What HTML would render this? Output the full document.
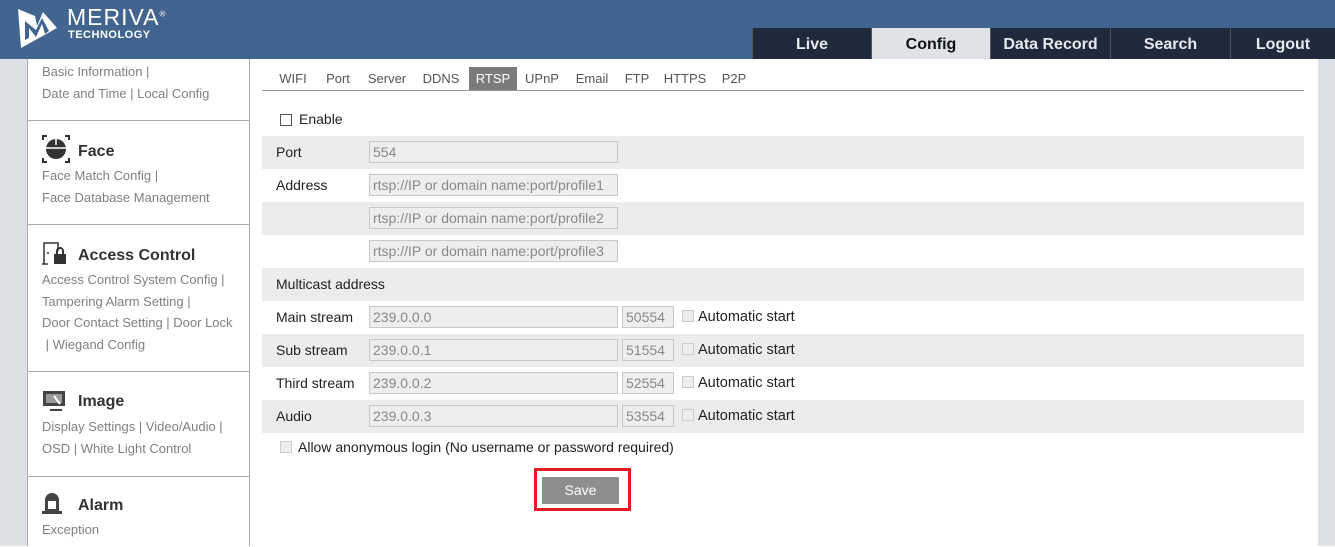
<!DOCTYPE html>
<html><head><meta charset="utf-8"><style>
*{margin:0;padding:0;box-sizing:border-box}
body{width:1335px;height:546px;overflow:hidden;background:#fff;font-family:"Liberation Sans",sans-serif;position:relative}
.hdr{position:absolute;left:0;top:0;width:1335px;height:59px;background:#41658e}
.nav{position:absolute;top:28px;height:31px;background:#1f2a3c;color:#e6e9ee;font-size:16px;font-weight:bold;text-align:center;line-height:34px;border-left:1px solid #555}
.nav.on{background:#dfe3e8;color:#111}
.lstrip{position:absolute;left:0;top:59px;width:27px;height:487px;background:#dde1e6}
.rstrip{position:absolute;left:1318px;top:59px;width:17px;height:487px;background:#dde1e6}
.side{position:absolute;left:27px;top:59px;width:223px;height:487px;border-left:1px solid #aaa;border-right:1px solid #aaa;background:#fff}
.sec{position:absolute;left:0;width:221px;border-bottom:1px solid #aaa}
.sec .t{position:absolute;left:50px;font-size:16px;font-weight:bold;color:#333}
.sec .l{position:absolute;left:14px;font-size:13px;color:#808080;line-height:21.5px}
.ic{position:absolute;left:14px}
.tabs{position:absolute;left:262px;top:67px;width:1042px;height:24px;border-bottom:1px solid #999}
.tab{position:absolute;top:0;height:23px;font-size:13px;color:#555;line-height:23px;text-align:center}
.tab.on{background:#7b7b7b;color:#fff}
.row{position:absolute;left:262px;width:1042px;height:33px;font-size:14px;color:#222;line-height:33px}
.g{background:#ececec}
.row .lb{position:absolute;left:14px}
.in{position:absolute;top:5px;height:22px;border:1px solid #c8c8c8;background:#eeeeee;color:#888;font-size:14px;line-height:20px;padding-left:3px}
.cb{position:absolute;width:12px;height:12px;border:1px solid #ccc;background:#eee}
.as{position:absolute;left:436px;font-size:14.5px;color:#222}
</style></head><body>
<div class="hdr">
<svg style="position:absolute;left:15px;top:4px" width="44" height="46" viewBox="0 0 44 46"><path d="M3 5 L20 12 L22 22 L28 8 L42 24 L6 44 Z" fill="#fff"/><path d="M10 17 L10 36 L14 34 L14 24 L21 33 L27 20 L30 30 L34 27 L27 14 L21 26 Z" fill="#41658e"/></svg>
<div style="position:absolute;left:67px;top:4px;color:#fff;font-size:23px;letter-spacing:1px">MERIVA<sup style="font-size:8px">®</sup></div>
<div style="position:absolute;left:68px;top:29px;color:#fff;font-size:11px;font-weight:bold;letter-spacing:.5px">TECHNOLOGY</div>
</div>
<div class="nav" style="left:752px;width:119px">Live</div>
<div class="nav on" style="left:871px;width:119px">Config</div>
<div class="nav" style="left:990px;width:120px">Data Record</div>
<div class="nav" style="left:1110px;width:120px">Search</div>
<div class="nav" style="left:1230px;width:105px">Logout</div>
<div class="lstrip"></div><div class="rstrip"></div>
<div class="side">
<div class="sec" style="top:0;height:62px"><div class="l" style="top:2px">Basic Information |<br>Date and Time | Local Config</div></div>
<div class="sec" style="top:62px;height:104px">
<svg class="ic" style="top:14px" width="28" height="28" viewBox="0 0 28 28"><path d="M1 5V1h4M23 1h4v4M1 23v4h4M27 23v4h-4" stroke="#333" stroke-width="2" fill="none"/><circle cx="14" cy="14" r="10" fill="#333"/><path d="M4 13h20M14 4v6" stroke="#fff" stroke-width="1.5"/></svg>
<div class="t" style="top:22px">Face</div><div class="l" style="top:44px">Face Match Config |<br>Face Database Management</div></div>
<div class="sec" style="top:166px;height:147px">
<svg class="ic" style="top:16px" width="26" height="24" viewBox="0 0 26 24"><path d="M2 23V2h14v8M0 23h6" stroke="#333" stroke-width="1.5" fill="none"/><rect x="12" y="13" width="12" height="10" fill="#333"/><path d="M15 13v-3a3 3 0 0 1 6 0v3" stroke="#333" stroke-width="2" fill="none"/><circle cx="6" cy="12" r="1" fill="#333"/></svg>
<div class="t" style="top:22px">Access Control</div><div class="l" style="top:44px">Access Control System Config |<br>Tampering Alarm Setting |<br>Door Contact Setting | Door Lock<br>&nbsp;| Wiegand Config</div></div>
<div class="sec" style="top:313px;height:105px">
<svg class="ic" style="top:18px" width="26" height="22" viewBox="0 0 26 22"><rect x="1" y="1" width="22" height="15" fill="#444"/><rect x="4" y="4" width="16" height="9" fill="#999"/><path d="M8 20h12" stroke="#444" stroke-width="2"/><path d="M12 6l6 8" stroke="#fff" stroke-width="2"/></svg>
<div class="t" style="top:21px">Image</div><div class="l" style="top:44px">Display Settings | Video/Audio |<br>OSD | White Light Control</div></div>
<div class="sec" style="top:418px;height:70px;border:none">
<svg class="ic" style="top:14px" width="20" height="24" viewBox="0 0 20 24"><path d="M3 20V9a7 7 0 0 1 14 0v11z" fill="#444"/><rect x="6" y="10" width="8" height="8" fill="#fff"/><rect x="0" y="20" width="20" height="3" fill="#444"/></svg>
<div class="t" style="top:20px">Alarm</div><div class="l" style="top:42px">Exception</div></div>
</div>
<div class="tabs">
<div class="tab" style="left:12px;width:38px">WIFI</div>
<div class="tab" style="left:58px;width:36px">Port</div>
<div class="tab" style="left:102px;width:46px">Server</div>
<div class="tab" style="left:156px;width:46px">DDNS</div>
<div class="tab on" style="left:207px;width:48px">RTSP</div>
<div class="tab" style="left:260px;width:40px">UPnP</div>
<div class="tab" style="left:308px;width:44px">Email</div>
<div class="tab" style="left:360px;width:30px">FTP</div>
<div class="tab" style="left:398px;width:50px">HTTPS</div>
<div class="tab" style="left:456px;width:32px">P2P</div>
</div>
<div class="row" style="top:103px"><div class="cb" style="left:18px;top:11px;background:#fff;border-color:#555"></div><span style="position:absolute;left:37px">Enable</span></div>
<div class="row g" style="top:136px"><span class="lb">Port</span><div class="in" style="left:107px;width:249px">554</div></div>
<div class="row" style="top:169px"><span class="lb">Address</span><div class="in" style="left:107px;width:249px">rtsp://IP or domain name:port/profile1</div></div>
<div class="row g" style="top:202px"><div class="in" style="left:107px;width:249px">rtsp://IP or domain name:port/profile2</div></div>
<div class="row" style="top:235px"><div class="in" style="left:107px;width:249px">rtsp://IP or domain name:port/profile3</div></div>
<div class="row g" style="top:268px"><span class="lb">Multicast address</span></div>
<div class="row" style="top:301px"><span class="lb">Main stream</span><div class="in" style="left:107px;width:249px">239.0.0.0</div><div class="in" style="left:360px;width:52px">50554</div><div class="cb" style="left:420px;top:9px"></div><span class="as">Automatic start</span></div>
<div class="row g" style="top:334px"><span class="lb">Sub stream</span><div class="in" style="left:107px;width:249px">239.0.0.1</div><div class="in" style="left:360px;width:52px">51554</div><div class="cb" style="left:420px;top:9px"></div><span class="as">Automatic start</span></div>
<div class="row" style="top:367px"><span class="lb">Third stream</span><div class="in" style="left:107px;width:249px">239.0.0.2</div><div class="in" style="left:360px;width:52px">52554</div><div class="cb" style="left:420px;top:9px"></div><span class="as">Automatic start</span></div>
<div class="row g" style="top:400px"><span class="lb">Audio</span><div class="in" style="left:107px;width:249px">239.0.0.3</div><div class="in" style="left:360px;width:52px">53554</div><div class="cb" style="left:420px;top:9px"></div><span class="as">Automatic start</span></div>
<div class="row" style="top:431px"><div class="cb" style="left:18px;top:10px"></div><span style="position:absolute;left:36px">Allow anonymous login (No username or password required)</span></div>
<div style="position:absolute;left:534px;top:468px;width:97px;height:43px;border:3px solid #e51c23"></div>
<div style="position:absolute;left:542px;top:477px;width:77px;height:27px;background:#8e8e8e;color:#fff;font-size:14px;text-align:center;line-height:27px">Save</div>
</body></html>
